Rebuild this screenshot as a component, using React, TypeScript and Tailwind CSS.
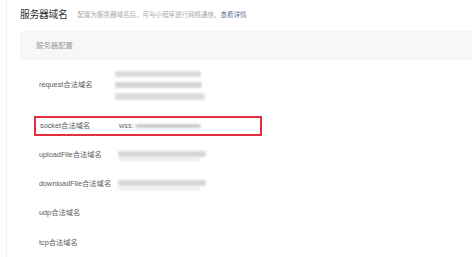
import React from 'react';

const font = { fontFamily: '"Liberation Sans", "Noto Sans CJK SC", sans-serif' };

function Blur({ w, h, tone, className = '' }: { w: string; h: string; tone: string; className?: string }) {
  return <div className={`${w} ${h} ${tone} ${className} rounded-[2px] blur-[1.2px]`} />;
}

function Row({ label, children, className = '' }: { label: string; children?: React.ReactNode; className?: string }) {
  return (
    <div className={`flex items-center pl-[19px] ${className}`}>
      <span className="w-[79px] shrink-0 text-[7.3px] text-[#5c5c5c] whitespace-nowrap">{label}</span>
      <div className="flex-1">{children}</div>
    </div>
  );
}

export default function App() {
  return (
    <div className="w-[474px] h-[257px] bg-white overflow-hidden" style={font}>
      <div className="ml-[6px] h-full border-l border-[#eeeeee] pl-[13px] pr-[2px]">
        {/* Title */}
        <div className="h-[31px] flex items-center gap-[10px] pb-[1px]">
          <span className="text-[9.8px] text-[#2f2f2f] tracking-[-0.3px]">服务器域名</span>
          <span className="text-[6.5px] text-[#a8a8a8]">
            配置为服务器域名后，可与小程序进行网络通信，<span className="text-[#576b95]">查看详情</span>
          </span>
        </div>

        {/* Header */}
        <div className="h-[29px] bg-[#f6f7f9] flex items-center pl-[16px]">
          <span className="text-[7.4px] text-[#9a9a9a]">服务器配置</span>
        </div>

        {/* request */}
        <Row label="request合法域名" className="h-[51px]">
          <div className="flex flex-col gap-[5px] -ml-[3px]">
            <Blur w="w-[86px]" h="h-[6px]" tone="bg-[#dadada]" />
            <Blur w="w-[87px]" h="h-[6px]" tone="bg-[#d4d4d4]" />
            <Blur w="w-[90px]" h="h-[7px]" tone="bg-[#dcdcdc]" className="rounded-r-[4px]" />
          </div>
        </Row>

        {/* socket highlighted */}
        <div className="mt-[5px] ml-[14px] w-[228px] h-[20px] border-2 border-[#e3303c] flex items-center pl-[4px]">
          <span className="w-[79px] shrink-0 text-[7.3px] text-[#5c5c5c] whitespace-nowrap">socket合法域名</span>
          <span className="text-[7.3px] text-[#6a6a6a]">wss:</span>
          <Blur w="w-[66px]" h="h-[4px]" tone="bg-[#cbcbcb]" className="ml-[1px]" />
        </div>

        {/* uploadFile */}
        <Row label="uploadFile合法域名" className="h-[29px] mt-[5px]">
          <div className="flex flex-col gap-[1px]">
            <Blur w="w-[88px]" h="h-[6px]" tone="bg-[#d6d6d6]" />
            <Blur w="w-[82px]" h="h-[3px]" tone="bg-[#eaeaea]" />
          </div>
        </Row>

        {/* downloadFile */}
        <Row label="downloadFile合法域名" className="h-[29px]">
          <div className="flex flex-col gap-[1px]">
            <Blur w="w-[88px]" h="h-[6px]" tone="bg-[#d6d6d6]" />
            <Blur w="w-[82px]" h="h-[3px]" tone="bg-[#eaeaea]" />
          </div>
        </Row>

        <Row label="udp合法域名" className="h-[29px]" />
        <Row label="tcp合法域名" className="h-[30px]" />
      </div>
    </div>
  );
}
